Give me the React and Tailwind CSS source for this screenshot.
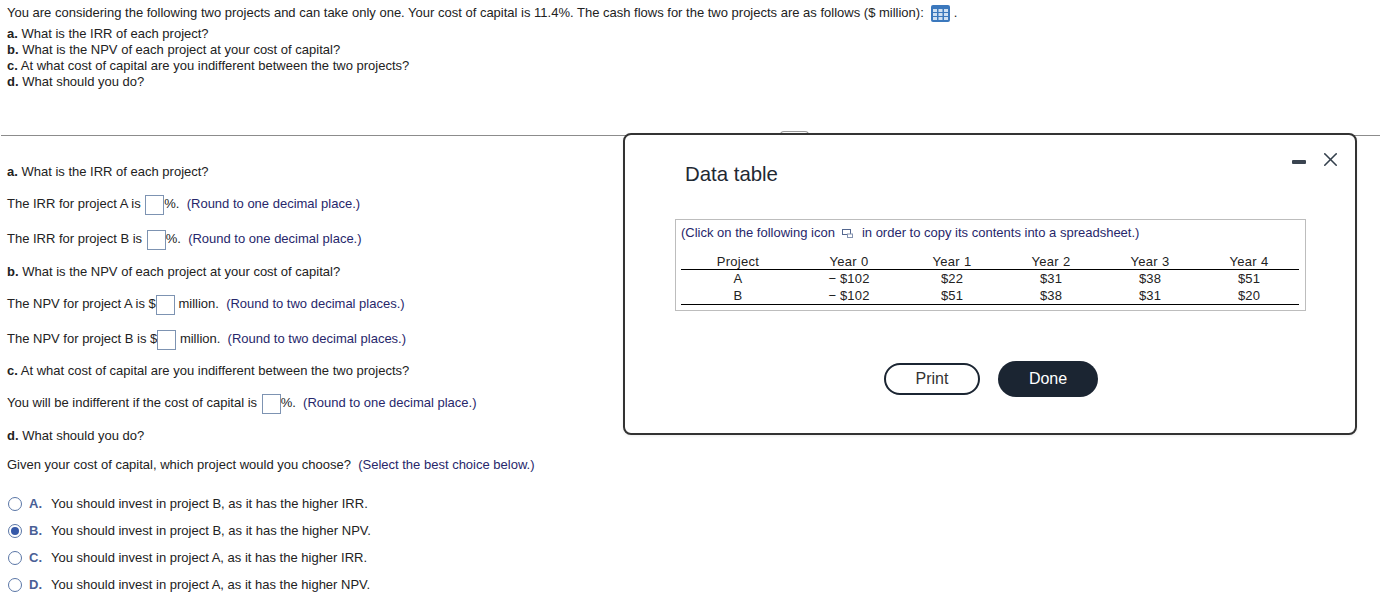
import { X } from "lucide-react";

const font = { fontFamily: '"Liberation Sans", Arial, sans-serif' };

function Blank({ className = "" }) {
  return <span className={`inline-block w-[19px] h-[20px] border border-[#7d93b2] bg-white align-middle ${className}`} />;
}

function Hint({ children }) {
  return <span className="text-[#27276b]">{children}</span>;
}

function GridIcon() {
  return (
    <svg width="19" height="17" viewBox="0 0 19 17" className="inline-block align-middle ml-[7px]">
      <rect x="0" y="0" width="19" height="17" rx="2" fill="#3b78bd" />
      <g fill="#cfe0f2">
        <rect x="2" y="4" width="4" height="3" />
        <rect x="7.5" y="4" width="4" height="3" />
        <rect x="13" y="4" width="4" height="3" />
        <rect x="2" y="8" width="4" height="3" />
        <rect x="7.5" y="8" width="4" height="3" />
        <rect x="13" y="8" width="4" height="3" />
        <rect x="2" y="12" width="4" height="3" />
        <rect x="7.5" y="12" width="4" height="3" />
        <rect x="13" y="12" width="4" height="3" />
      </g>
    </svg>
  );
}

function CopyIcon() {
  return (
    <svg width="11" height="9" viewBox="0 0 11 9" className="inline-block ml-[7px] mr-[9px] align-[-1px]">
      <rect x="0.5" y="0.5" width="8" height="5" fill="#fff" stroke="#54678f" />
      <rect x="5.5" y="5" width="5" height="3.5" fill="#fff" stroke="#8493b0" />
    </svg>
  );
}

function Choice({ letter, text, selected }) {
  return (
    <div className="flex items-center h-[27px]">
      <span className="w-[14px] h-[14px] ml-[8px] rounded-full border border-[#5a76a6] flex items-center justify-center bg-white">
        {selected && <span className="w-[8px] h-[8px] rounded-full bg-[#3558a8]" />}
      </span>
      <span className="w-[23px] ml-[7px] font-bold text-[#4a5f96]">{letter}.</span>
      <span className="ml-[-1px]">{text}</span>
    </div>
  );
}

const rows = [
  ["Project", "Year 0", "Year 1", "Year 2", "Year 3", "Year 4"],
  ["A", "− $102", "$22", "$31", "$38", "$51"],
  ["B", "− $102", "$51", "$38", "$31", "$20"],
];

function DataModal() {
  return (
    <div className="absolute left-[623px] top-[133px] w-[734px] h-[302px] bg-white border-2 border-[#333] rounded-[8px] shadow-[0_1px_3px_rgba(0,0,0,0.08)]">
      <div className="absolute right-[13px] top-[13px] flex items-center gap-[13px] text-[#333]">
        <span className="w-[14px] h-[4px] rounded-[1px] bg-[#3a4450] mt-[5px]" />
        <X size={23} strokeWidth={1.6} className="text-[#34404d]" />
      </div>
      <h2 className="ml-[60px] mt-[27px] text-[20.4px] leading-[24px] text-[#1f2933]">Data table</h2>
      <div className="ml-[50px] mt-[33px] w-[631px] h-[92px] border border-[#bdbdbd] px-[5px] text-[13px] text-[#222]">
        <div className="h-[25px] leading-[25px] text-[#27276b]">
          (Click on the following icon
          <CopyIcon />
          in order to copy its contents into a spreadsheet.)
        </div>
        <div className="mt-[7px] w-[618px] border-b border-black">
          {rows.map((row, i) => (
            <div
              key={row[0]}
              className={`grid grid-cols-[114px_108px_98px_100px_98px_100px] text-center ${i === 0 ? "h-[18px] leading-[19px] border-b border-black tracking-[0.3px]" : "h-[17px] leading-[17px] tracking-[0.15px]"}`}
            >
              {row.map((cell, j) => (
                <span key={j}>{cell}</span>
              ))}
            </div>
          ))}
        </div>
      </div>
      <div className="flex items-center mt-[50px] ml-[259px] gap-[18px] text-[16px]">
        <button className="w-[96px] h-[32px] rounded-full border-2 border-[#1b2532] text-[#333]">Print</button>
        <button className="w-[100px] h-[36px] rounded-full bg-[#1b2532] text-white">Done</button>
      </div>
    </div>
  );
}

export default function App() {
  return (
    <div className="relative w-[1380px] h-[605px] overflow-hidden bg-white text-[13px] text-[#222]" style={font}>
      <div className="h-[136px] pl-[7px] pt-[4px] border-b border-[#8c8c8c] ml-[1px]">
        <div className="h-[17px] leading-[17px] ml-[-1px] whitespace-nowrap">
          You are considering the following two projects and can take only one. Your cost of capital is 11.4%. The cash flows for the two projects are as follows ($ million):
          <GridIcon />
          <span className="ml-[4px]">.</span>
        </div>
        <div className="mt-[5px] ml-[-1px] leading-[16px]">
          <div><b>a.</b> What is the IRR of each project?</div>
          <div><b>b.</b> What is the NPV of each project at your cost of capital?</div>
          <div><b>c.</b> At what cost of capital are you indifferent between the two projects?</div>
          <div><b>d.</b> What should you do?</div>
        </div>
      </div>
      <div className="absolute left-[780px] top-[131px] w-[29px] h-[5px] rounded-t-[4px] border border-b-0 border-[#999] bg-white" />

      <div className="pl-[7px] whitespace-nowrap">
        <div className="mt-[27px] h-[18px] leading-[18px]"><b>a.</b> What is the IRR of each project?</div>
        <div className="mt-[12px] h-[22px] leading-[22px]">
          The IRR for project A is <Blank className="ml-[1px]" />%.&nbsp; <Hint>(Round to one decimal place.)</Hint>
        </div>
        <div className="mt-[13px] h-[22px] leading-[22px]">
          The IRR for project B is <Blank className="ml-[1px]" />%.&nbsp; <Hint>(Round to one decimal place.)</Hint>
        </div>
        <div className="mt-[13px] h-[18px] leading-[18px]"><b>b.</b> What is the NPV of each project at your cost of capital?</div>
        <div className="mt-[12px] h-[22px] leading-[22px]">
          The NPV for project A is $<Blank /> million.&nbsp; <Hint>(Round to two decimal places.)</Hint>
        </div>
        <div className="mt-[13px] h-[22px] leading-[22px]">
          The NPV for project B is $<Blank /> million.&nbsp; <Hint>(Round to two decimal places.)</Hint>
        </div>
        <div className="mt-[12px] h-[18px] leading-[18px]"><b>c.</b> At what cost of capital are you indifferent between the two projects?</div>
        <div className="mt-[12px] h-[22px] leading-[22px]">
          You will be indifferent if the cost of capital is <Blank className="ml-[1px]" />%.&nbsp; <Hint>(Round to one decimal place.)</Hint>
        </div>
        <div className="mt-[13px] h-[18px] leading-[18px]"><b>d.</b> What should you do?</div>
        <div className="mt-[11px] h-[18px] leading-[18px]">
          Given your cost of capital, which project would you choose?&nbsp; <Hint>(Select the best choice below.)</Hint>
        </div>
      </div>
      <div className="mt-[16px] whitespace-nowrap">
        <Choice letter="A" text="You should invest in project B, as it has the higher IRR." />
        <Choice letter="B" text="You should invest in project B, as it has the higher NPV." selected />
        <Choice letter="C" text="You should invest in project A, as it has the higher IRR." />
        <Choice letter="D" text="You should invest in project A, as it has the higher NPV." />
      </div>

      <DataModal />
    </div>
  );
}
